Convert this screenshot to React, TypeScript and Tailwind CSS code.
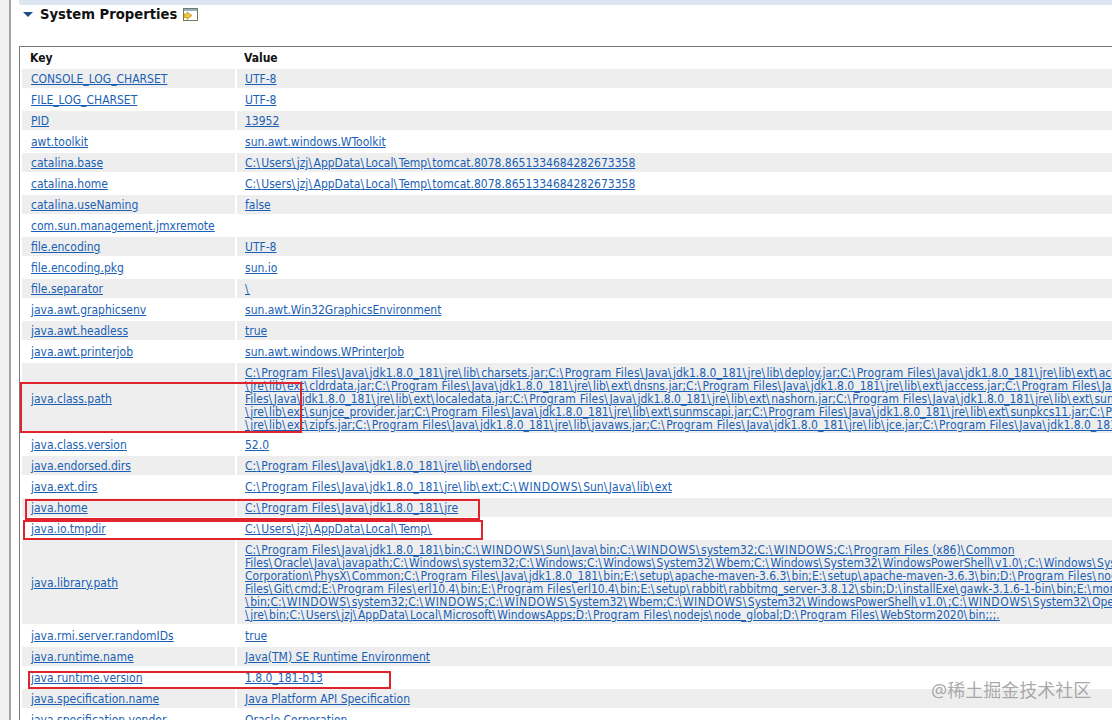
import React from "react";

const simple = (k: string, v?: string) => ({ k, v: v === undefined ? k : v });

const J = "C:\\Program Files\\Java\\jdk1.8.0_181";

const classPath = [
  `${J}\\jre\\lib\\charsets.jar;${J}\\jre\\lib\\deploy.jar;${J}\\jre\\lib\\ext\\access-bridge-64.jar;`,
  `\\jre\\lib\\ext\\cldrdata.jar;${J}\\jre\\lib\\ext\\dnsns.jar;${J}\\jre\\lib\\ext\\jaccess.jar;${J}\\jre`,
  `Files\\Java\\jdk1.8.0_181\\jre\\lib\\ext\\localedata.jar;${J}\\jre\\lib\\ext\\nashorn.jar;${J}\\jre\\lib\\ext\\sunec.jar`,
  `\\jre\\lib\\ext\\sunjce_provider.jar;${J}\\jre\\lib\\ext\\sunmscapi.jar;${J}\\jre\\lib\\ext\\sunpkcs11.jar;${J}`,
  `\\jre\\lib\\ext\\zipfs.jar;${J}\\jre\\lib\\javaws.jar;${J}\\jre\\lib\\jce.jar;${J}\\jre\\lib\\jfr.jar`,
];

const libPath = [
  `${J}\\bin;C:\\WINDOWS\\Sun\\Java\\bin;C:\\WINDOWS\\system32;C:\\WINDOWS;C:\\Program Files (x86)\\Common`,
  "Files\\Oracle\\Java\\javapath;C:\\Windows\\system32;C:\\Windows;C:\\Windows\\System32\\Wbem;C:\\Windows\\System32\\WindowsPowerShell\\v1.0\\;C:\\Windows\\System32",
  `Corporation\\PhysX\\Common;${J}\\bin;E:\\setup\\apache-maven-3.6.3\\bin;E:\\setup\\apache-maven-3.6.3\\bin;D:\\Program Files\\nodejs`,
  "Files\\Git\\cmd;E:\\Program Files\\erl10.4\\bin;E:\\Program Files\\erl10.4\\bin;E:\\setup\\rabbit\\rabbitmq_server-3.8.12\\sbin;D:\\installExe\\gawk-3.1.6-1-bin\\bin;E:\\mongodb",
  "\\bin;C:\\WINDOWS\\system32;C:\\WINDOWS;C:\\WINDOWS\\System32\\Wbem;C:\\WINDOWS\\System32\\WindowsPowerShell\\v1.0\\;C:\\WINDOWS\\System32\\OpenSSH",
  "\\jre\\bin;C:\\Users\\jzj\\AppData\\Local\\Microsoft\\WindowsApps;D:\\Program Files\\nodejs\\node_global;D:\\Program Files\\WebStorm2020\\bin;;;.",
];

const tomcat = "C:\\Users\\jzj\\AppData\\Local\\Temp\\tomcat.8078.8651334684282673358";

type Row = { k: string; v: string; lines?: string[]; pad?: string };

const rows: Row[] = [
  simple("CONSOLE_LOG_CHARSET", "UTF-8"),
  simple("FILE_LOG_CHARSET", "UTF-8"),
  simple("PID", "13952"),
  simple("awt.toolkit", "sun.awt.windows.WToolkit"),
  simple("catalina.base", tomcat),
  simple("catalina.home", tomcat),
  simple("catalina.useNaming", "false"),
  simple("com.sun.management.jmxremote", ""),
  simple("file.encoding", "UTF-8"),
  simple("file.encoding.pkg", "sun.io"),
  simple("file.separator", "\\"),
  simple("java.awt.graphicsenv", "sun.awt.Win32GraphicsEnvironment"),
  simple("java.awt.headless", "true"),
  simple("java.awt.printerjob", "sun.awt.windows.WPrinterJob"),
  { k: "java.class.path", v: "", lines: classPath, pad: "pt-[4px] pb-[1px]" },
  simple("java.class.version", "52.0"),
  simple("java.endorsed.dirs", `${J}\\jre\\lib\\endorsed`),
  simple("java.ext.dirs", `${J}\\jre\\lib\\ext;C:\\WINDOWS\\Sun\\Java\\lib\\ext`),
  simple("java.home", `${J}\\jre`),
  simple("java.io.tmpdir", "C:\\Users\\jzj\\AppData\\Local\\Temp\\"),
  { k: "java.library.path", v: "", lines: libPath, pad: "pt-[4px] pb-[2px]" },
  simple("java.rmi.server.randomIDs", "true"),
  simple("java.runtime.name", "Java(TM) SE Runtime Environment"),
  simple("java.runtime.version", "1.8.0_181-b13"),
  simple("java.specification.name", "Java Platform API Specification"),
  simple("java.specification.vendor", "Oracle Corporation"),
];

/* Tahoma's backslash and capitals run wider than this font's: space them out. */
function Path({ text }: { text: string }) {
  return (
    <>
      {text.split(/(\\|WINDOWS|Program Files)/).map((part, i) =>
        part === "\\" ? (
          <span key={i} className="tracking-[1.5px]">{part}</span>
        ) : part === "WINDOWS" ? (
          <span key={i} className="tracking-[0.5px]">{part}</span>
        ) : part === "Program Files" ? (
          <span key={i} className="tracking-[0.2px]">{part}</span>
        ) : (
          part
        )
      )}
    </>
  );
}

function TableRow({ row, index }: { row: Row; index: number }) {
  const bg = index % 2 === 0 ? "bg-[#eeeeee]" : "bg-white";
  return (
    <div className="flex gap-[2px] mb-[2px]">
      <div className={`${bg} w-[213px] shrink-0 flex items-center pl-[9px] pt-[3px] pb-[1px] min-h-[19px]`}>
        <a className="text-[#1a5fb4] underline whitespace-nowrap">{row.k}</a>
      </div>
      <div className={`${bg} flex-1 min-w-0 overflow-hidden pl-[8px] ${row.pad ?? "pt-[3px] pb-[1px]"} min-h-[19px]`}>
        {row.lines ? (
          <div className="flex flex-col">
            {row.lines.map((l) => (
              <a key={l} className="text-[#1a5fb4] underline whitespace-nowrap h-[13px] leading-[13px]"><Path text={l} /></a>
            ))}
          </div>
        ) : (
          <a className="text-[#1a5fb4] underline whitespace-nowrap"><Path text={row.v} /></a>
        )}
      </div>
    </div>
  );
}

function Mark({ cls }: { cls: string }) {
  return <div className={`absolute border-2 border-[#e0232c] ${cls}`} />;
}

export default function App() {
  return (
    <div className="relative w-[1112px] h-[720px] overflow-hidden bg-white flex font-['DejaVu_Sans_Condensed','DejaVu_Sans',sans-serif] [font-stretch:condensed] text-[12px] leading-[15px]">
      <div className="w-[11px] shrink-0 bg-[#f0f0f0] border-r-2 border-[#a3a3a3]" />
      <div className="flex-1 min-w-0 pl-[6px]">
        <div className="h-[5px] ml-[2px] bg-[#dbe6f1] rounded-bl-[3px]" />
        <div className="flex items-center h-[18px] ml-[6px]">
          <svg width="10" height="5" viewBox="0 0 10 5" className="shrink-0 mr-[7px] mt-[1px]">
            <path d="M0 0h10L5 5z" fill="#1f4e86" />
          </svg>
          <span className="font-['DejaVu_Sans',sans-serif] [font-stretch:normal] font-bold text-[13.2px] text-[#111]">System Properties</span>
          <svg width="15" height="13" viewBox="0 0 15 13" className="ml-[6px] shrink-0">
            <rect x="0.5" y="0.5" width="14" height="12" fill="#ffffff" stroke="#77775a" />
            <rect x="1" y="1" width="13" height="2" fill="#8fb0cf" />
            <path d="M1 6h3V4l5 3.5L4 11.5V9.5H1z" fill="#f0c53c" stroke="#b08a1e" strokeWidth="0.6" />
          </svg>
        </div>
        <div className="mt-[23px] ml-[2px] border-t border-l border-[#7a7a7a] pl-[2px] h-[700px]">
          <div className="flex gap-[2px] h-[22px] items-center font-bold text-[#111]">
            <div className="w-[213px] pl-[8px]">Key</div>
            <div className="pl-[7px]">Value</div>
          </div>
          {rows.map((r, i) => (
            <TableRow key={r.k} row={r} index={i} />
          ))}
        </div>
      </div>
      <Mark cls="left-[20px] top-[382px] w-[282px] h-[51px]" />
      <Mark cls="left-[25px] top-[499px] w-[455px] h-[21px]" />
      <Mark cls="left-[23px] top-[520px] w-[460px] h-[20px]" />
      <Mark cls="left-[28px] top-[671px] w-[363px] h-[18px]" />
      <div className="absolute left-[931px] top-[679px] text-[18px] leading-[22px] [font-stretch:normal] text-[#9a9a9a]/85 font-['Noto_Sans','Noto_Sans_CJK_SC',sans-serif]">@稀土掘金技术社区</div>
    </div>
  );
}
